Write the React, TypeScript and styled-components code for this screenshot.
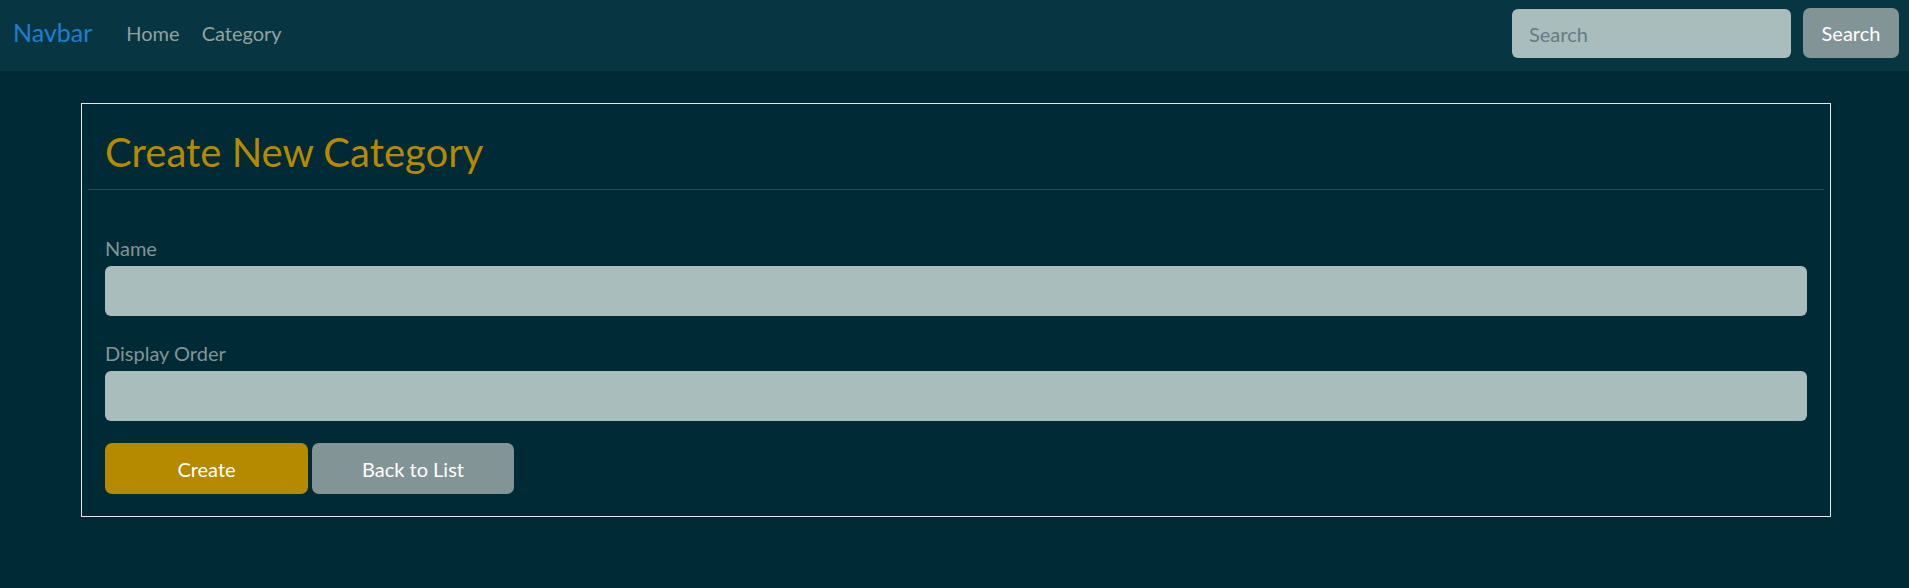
import styled, { createGlobalStyle } from 'styled-components'
import { FC } from 'react'

const GlobalStyle = createGlobalStyle`
    html, body {
        margin: 0;
        padding: 0;
        background-color: #002b36;
    }
    body {
        font-family: 'Lato', 'Liberation Sans', sans-serif;
        font-size: 20px;
        line-height: 1.5;
        color: #839496;
    }
    * {
        box-sizing: border-box;
    }
`;

const Page = styled.div`
    min-height: 588px;
    background-color: #002b36;
`;
const Nav = styled.nav`
    height: 71px;
    background-color: #073642;
    display: flex;
    align-items: flex-start;
    justify-content: space-between;
    padding: 8px 10px 0 13px;
`;
const NavLeft = styled.div`
    height: 50px;
    display: flex;
    align-items: center;
`;
const Brand = styled.a`
    font-size: 25px;
    color: #1c7fd0;
    margin-right: 23px;
    text-decoration: none;
`;
const NavLink = styled.a`
    font-size: 20px;
    color: #93a1a1;
    padding: 0 11px;
    text-decoration: none;
`;
const SearchForm = styled.form`
    display: flex;
    align-items: flex-start;
    gap: 12px;
`;
const SearchInput = styled.input`
    width: 279px;
    height: 49px;
    margin-top: 1px;
    border: none;
    border-radius: 6px;
    background-color: #a9bdbd;
    padding: 0 17px;
    font-family: inherit;
    font-size: 20px;
    color: #002b36;
    &::placeholder {
        color: #657b83;
    }
    &:focus {
        outline: none;
    }
`;
const Button = styled.button<{ $variant: 'primary' | 'secondary', $width: number, $height: number }>`
    height: ${p => p.$height}px;
    width: ${p => p.$width}px;
    padding: 0;
    border: none;
    border-radius: 7px;
    font-family: inherit;
    font-size: 20px;
    color: #ffffff;
    background-color: ${p => p.$variant === 'primary' ? '#b58900' : '#839496'};
`;
const Container = styled.div`
    padding: 32px 78px 0 81px;
`;
const Card = styled.div`
    border: 1px solid #e4e8e8;
    padding: 0 6px;
`;
const CardHeader = styled.div`
    padding: 24px 17px 13px;
    border-bottom: 1px solid #264b54;
`;
const Title = styled.h2`
    margin: 0;
    font-size: 40px;
    font-weight: 400;
    line-height: 48px;
    color: #b58900;
`;
const CardBody = styled.div`
    padding: 43px 17px 22px;
`;
const Field = styled.div`
    margin-bottom: 22px;
`;
const Label = styled.label`
    display: block;
    margin-bottom: 3px;
    font-size: 20px;
    line-height: 30px;
    color: #839496;
`;
const TextInput = styled.input`
    display: block;
    width: 100%;
    height: 50px;
    border: none;
    border-radius: 6px;
    background-color: #a9bdbd;
    padding: 0 17px;
    font-family: inherit;
    font-size: 20px;
    &:focus {
        outline: none;
    }
`;
const Actions = styled.div`
    display: flex;
    gap: 4px;
    margin-top: 2px;
`;

interface FieldProps {
    label: string
}
const FormField: FC<FieldProps> = ({ label }) => (
    <Field>
        <Label>{label}</Label>
        <TextInput />
    </Field>
);

const App: FC = () => {
    return (
        <Page>
            <GlobalStyle />
            <Nav>
                <NavLeft>
                    <Brand href="#">Navbar</Brand>
                    <NavLink href="#">Home</NavLink>
                    <NavLink href="#">Category</NavLink>
                </NavLeft>
                <SearchForm onSubmit={e => e.preventDefault()}>
                    <SearchInput placeholder="Search" />
                    <Button $variant="secondary" $width={96} $height={50}>Search</Button>
                </SearchForm>
            </Nav>
            <Container>
                <Card>
                    <CardHeader>
                        <Title>Create New Category</Title>
                    </CardHeader>
                    <CardBody>
                        <FormField label="Name" />
                        <FormField label="Display Order" />
                        <Actions>
                            <Button $variant="primary" $width={203} $height={51}>Create</Button>
                            <Button $variant="secondary" $width={202} $height={51}>Back to List</Button>
                        </Actions>
                    </CardBody>
                </Card>
            </Container>
        </Page>
    )
}
export default App
